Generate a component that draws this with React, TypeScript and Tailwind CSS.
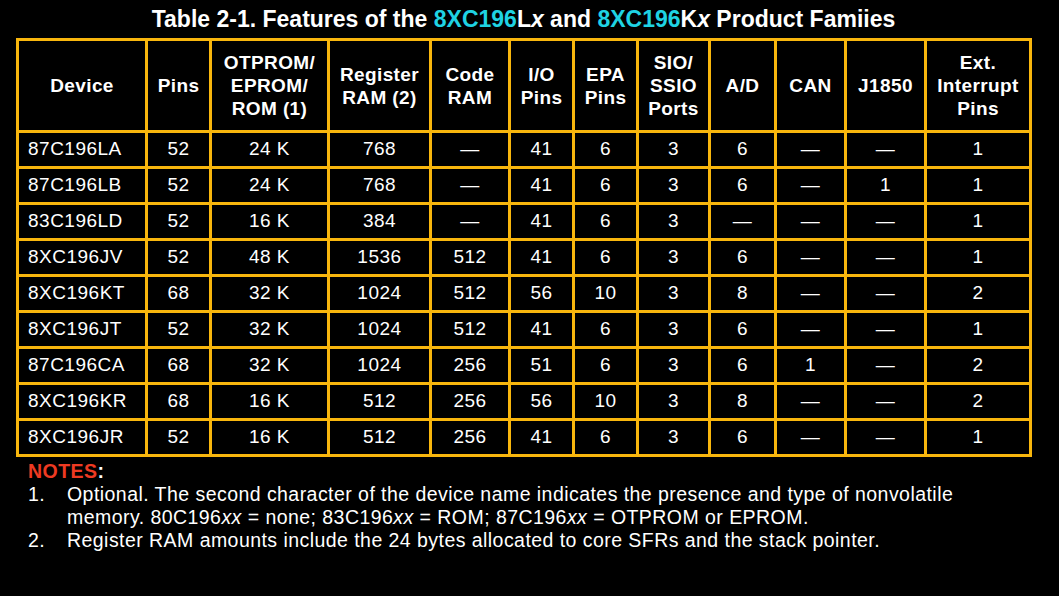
import React from "react";

const cols = [129, 64, 118, 102, 79, 64, 64, 72, 66, 70, 80, 105];

const headers = [
    ["Device"],
    ["Pins"],
    ["OTPROM/", "EPROM/", "ROM (1)"],
    ["Register", "RAM (2)"],
    ["Code", "RAM"],
    ["I/O", "Pins"],
    ["EPA", "Pins"],
    ["SIO/", "SSIO", "Ports"],
    ["A/D"],
    ["CAN"],
    ["J1850"],
    ["Ext.", "Interrupt", "Pins"],
];

const D = "—";
const rows = [
    ["87C196LA", "52", "24 K", "768", D, "41", "6", "3", "6", D, D, "1"],
    ["87C196LB", "52", "24 K", "768", D, "41", "6", "3", "6", D, "1", "1"],
    ["83C196LD", "52", "16 K", "384", D, "41", "6", "3", D, D, D, "1"],
    ["8XC196JV", "52", "48 K", "1536", "512", "41", "6", "3", "6", D, D, "1"],
    ["8XC196KT", "68", "32 K", "1024", "512", "56", "10", "3", "8", D, D, "2"],
    ["8XC196JT", "52", "32 K", "1024", "512", "41", "6", "3", "6", D, D, "1"],
    ["87C196CA", "68", "32 K", "1024", "256", "51", "6", "3", "6", "1", D, "2"],
    ["8XC196KR", "68", "16 K", "512", "256", "56", "10", "3", "8", D, D, "2"],
    ["8XC196JR", "52", "16 K", "512", "256", "41", "6", "3", "6", D, D, "1"],
];

export default function App() {
    return (
        <div className="w-[1059px] h-[596px] bg-black text-white overflow-hidden" style={{ fontFamily: '"Liberation Sans", Arial, sans-serif' }}>
            {/* Title */}
            <h1 className="h-[38px] flex items-center justify-center text-[23px] font-bold tracking-[0px] pr-[12px]">
                Table 2-1. Features of the&nbsp;<span className="text-[#1fd3e3]">8XC196</span>L<i>x</i>&nbsp;and&nbsp;
                <span className="text-[#1fd3e3]">8XC196</span>K<i>x</i>&nbsp;Product Famiies
            </h1>

            {/* Table */}
            <table className="ml-[16px] table-fixed border-collapse border-[3px] border-[#f8b60d]">
                <colgroup>
                    {cols.map((w, i) => (
                        <col key={i} style={{ width: w }} />
                    ))}
                </colgroup>
                <thead>
                    <tr className="h-[92px]">
                        {headers.map((h, i) => (
                            <th key={i} className="border-[3px] border-[#f8b60d] p-0 text-[19px] leading-[23px] font-bold tracking-[0.4px] text-center align-middle">
                                {h.map((l, j) => (
                                    <div key={j}>{l}</div>
                                ))}
                            </th>
                        ))}
                    </tr>
                </thead>
                <tbody>
                    {rows.map((r, i) => (
                        <tr key={i} className="h-[36px]">
                            {r.map((c, j) => (
                                <td
                                    key={j}
                                    className={`border-[3px] border-[#f8b60d] p-0 text-[19px] tracking-[0.5px] align-middle ${j === 0 ? "text-left pl-[9px]" : "text-center"}`}
                                >
                                    {c}
                                </td>
                            ))}
                        </tr>
                    ))}
                </tbody>
            </table>

            {/* Notes */}
            <div className="pl-[28px] pt-[3px] text-[19.5px] leading-[23px] tracking-[0.45px]">
                <div className="font-bold">
                    <span className="text-[#ee3a22]">NOTES</span>:
                </div>
                <div className="flex">
                    <span className="w-[39px] shrink-0">1.</span>
                    <span className="w-[895px]">
                        Optional. The second character of the device name indicates the presence and type of nonvolatile memory. 80C196<i>xx</i> = none; 83C196<i>xx</i> = ROM; 87C196<i>xx</i> = OTPROM or EPROM.
                    </span>
                </div>
                <div className="flex">
                    <span className="w-[39px] shrink-0">2.</span>
                    <span>Register RAM amounts include the 24 bytes allocated to core SFRs and the stack pointer.</span>
                </div>
            </div>
        </div>
    );
}
